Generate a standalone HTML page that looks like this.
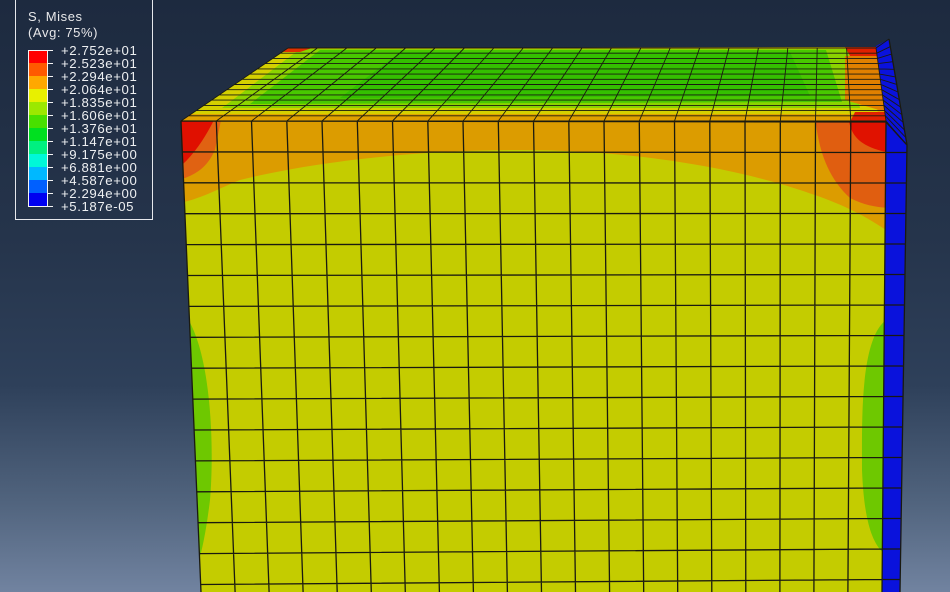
<!DOCTYPE html>
<html><head><meta charset="utf-8">
<style>
html,body{margin:0;padding:0;}
body{width:950px;height:592px;overflow:hidden;position:relative;
background:linear-gradient(to bottom,#1d2a3f 0%,#25344b 40%,#2e405a 65%,#51647e 85%,#7183a0 100%);
font-family:"Liberation Sans",sans-serif;}
#legend{position:absolute;left:15px;top:-2px;width:136px;height:220px;border:1px solid #e6e8ec;}
.t{position:absolute;left:28px;color:#e8e8ea;font-size:13px;letter-spacing:0.6px;}
.lab{position:absolute;left:61px;color:#eef0f2;font-size:13.2px;letter-spacing:0.6px;line-height:13px;}
svg{position:absolute;left:0;top:0;}
</style></head><body>
<svg id="s" width="950" height="592" viewBox="0 0 950 592">
<defs>
<clipPath id="front"><polygon points="181,121 886,122 882,592 201,592 201,600"/></clipPath>
<clipPath id="top"><polygon points="288,48 876,47 886,122 181,121"/></clipPath>
</defs>
<g clip-path="url(#top)">
<rect x="170" y="40" width="730" height="90" fill="#e0a400"/>
<polygon points="275,48 866,47 878,114 190,114" fill="#d4d000"/>
<polygon points="300,49 848,49 860,108 222,108" fill="#8cd400"/>
<polygon points="320,50 826,50 842,102 250,104" fill="#48c800"/>
<polygon points="400,52 790,52 810,96 340,98" fill="#34c000"/>
<polygon points="845,47 878,47 880,56 850,56" fill="#e02000"/>
<polygon points="845,56 882,56 886,112 845,100" fill="#e08000"/>
<polygon points="288,48 312,48 300,52 283,52" fill="#e03000"/>
<polygon points="181,116 886,116 886,122 181,121" fill="#e0a000"/>
<polygon points="855,112 886,112 886,122 850,122" fill="#e02000"/>
</g>
<g clip-path="url(#front)">
<rect x="170" y="115" width="730" height="480" fill="#c4cc00"/>
<path d="M170,115 L900,115 L900,240 C860,210 830,200 800,190 C740,170 640,150 520,150 C400,150 300,165 240,180 C215,190 200,200 170,205 Z" fill="#dc9c00"/>
<path d="M170,115 L222,115 L215,150 C208,165 200,172 185,178 L170,178 Z" fill="#e06212"/>
<path d="M170,115 L215,118 C208,132 198,150 182,165 L170,165 Z" fill="#e01000"/>
<path d="M900,115 L815,115 C818,150 828,178 850,198 C870,208 885,208 900,208 Z" fill="#e05e10"/>
<path d="M900,115 L848,115 C850,132 855,145 886,152 Z" fill="#e01200"/>
<path d="M181,310 C210,340 215,440 210,500 C205,540 200,560 195,570 L181,570 Z" fill="#6ec800"/>
<path d="M886,320 C860,340 862,420 862,470 C864,520 872,545 886,555 Z" fill="#6ec800"/>
</g>
<polygon points="876,46 889,39 907,145 900,592 882,592 886,122" fill="#0a12dc"/>
<path id="grid" d="" stroke="#1a1a10" stroke-width="1.3" fill="none"/>
<path id="grid2" d="" stroke="#1a1a10" stroke-width="0.9" fill="none"/>
</svg>
<div id="legend"></div>
<div class="t" style="top:9px">S, Mises</div>
<div class="t" style="top:25px">(Avg: 75%)</div>
<svg width="160" height="225" style="left:0;top:0">
<g stroke="#f4f4f4" stroke-width="1">
<rect x="28.5" y="50" width="19" height="13" fill="#ff0000" stroke="none"/>
<rect x="28.5" y="63" width="19" height="13" fill="#ff5a00" stroke="none"/>
<rect x="28.5" y="76" width="19" height="13" fill="#ffa800" stroke="none"/>
<rect x="28.5" y="89" width="19" height="13" fill="#e8f000" stroke="none"/>
<rect x="28.5" y="102" width="19" height="13" fill="#9ce800" stroke="none"/>
<rect x="28.5" y="115" width="19" height="13" fill="#48e000" stroke="none"/>
<rect x="28.5" y="128" width="19" height="13" fill="#00e020" stroke="none"/>
<rect x="28.5" y="141" width="19" height="13" fill="#00f080" stroke="none"/>
<rect x="28.5" y="154" width="19" height="13" fill="#00f8d8" stroke="none"/>
<rect x="28.5" y="167" width="19" height="13" fill="#00b8ff" stroke="none"/>
<rect x="28.5" y="180" width="19" height="13" fill="#0060ff" stroke="none"/>
<rect x="28.5" y="193" width="19" height="13" fill="#0000f0" stroke="none"/>
<rect x="28.5" y="50.5" width="19" height="156" fill="none"/>
<path d="M47,50.5h6M47,63.5h6M47,76.5h6M47,89.5h6M47,102.5h6M47,115.5h6M47,128.5h6M47,141.5h6M47,154.5h6M47,167.5h6M47,180.5h6M47,193.5h6M47,206.5h6"/>
</g>
</svg>
<div class="lab" style="top:44px">+2.752e+01<br>+2.523e+01<br>+2.294e+01<br>+2.064e+01<br>+1.835e+01<br>+1.606e+01<br>+1.376e+01<br>+1.147e+01<br>+9.175e+00<br>+6.881e+00<br>+4.587e+00<br>+2.294e+00<br>+5.187e-05</div>
<script>
(function(){
var d="",d2="";
function L(a,b,c,e){return "M"+a.toFixed(1)+","+b.toFixed(1)+"L"+c.toFixed(1)+","+e.toFixed(1);}
var N=20;
for(var i=0;i<=N;i++){
 var t=i/N;
 d+=L(181+t*705,121+t,201+t*681,592);
}
for(var k=0;k<=16;k++){
 var yl=121+k*30.9, yr=122+k*30.5;
 if(yl>592)break;
 var xl=181+(yl-121)*20/471, xr=886-(yr-122)*4/470;
 d+=L(xl,yl,xr,yr);
 var yo=yr+(k==0?23:0);
 var xo=907-(Math.max(yo,145)-145)*7/447;
 d+=L(xr,yr,xo,yo);
}
d+=L(889,39,907,145)+L(907,145,900,592);
var R=14;
for(var i=0;i<=N;i++){
 var t=i/N;
 d2+=L(288+t*588,48,181+t*705,121);
}
for(var k=0;k<=R;k++){
 var s=k/R;
 var y=48+s*73;
 d2+=L(288-s*107,y,876+s*10,y);
 d2+=L(876+s*10,y,889+s*18,39+s*106);
}
document.getElementById("grid").setAttribute("d",d);
document.getElementById("grid2").setAttribute("d",d2);
})();
</script>
</body></html>
